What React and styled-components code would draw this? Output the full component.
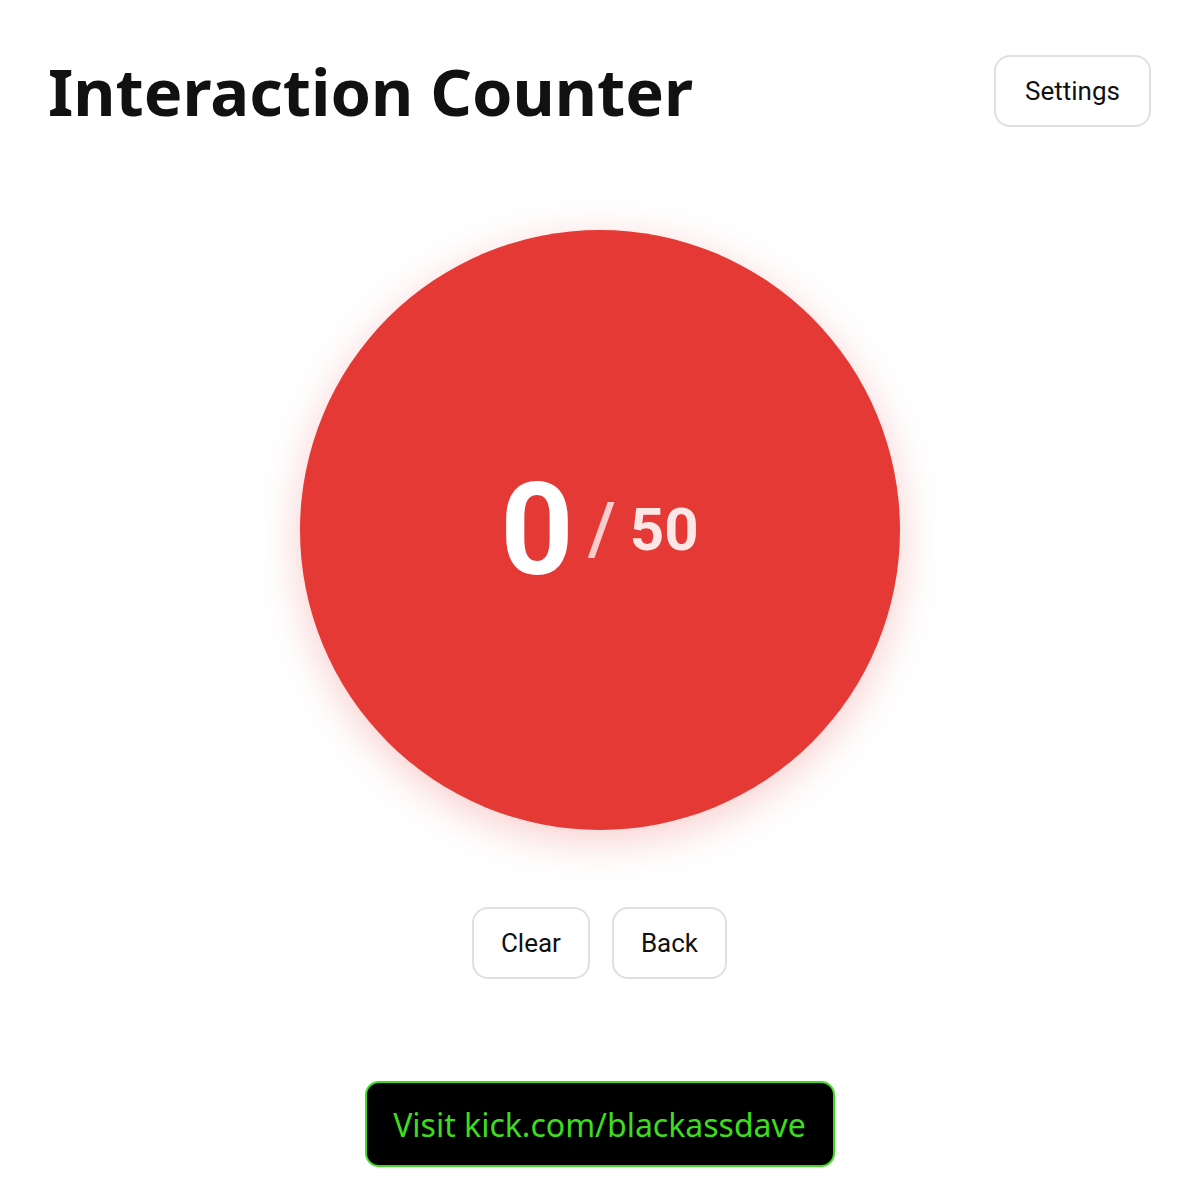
import styled, { createGlobalStyle } from 'styled-components';

const GlobalStyle = createGlobalStyle`
	html, body {
		margin: 0;
		padding: 0;
		background: #fff;
	}
	body {
		font-family: Roboto, 'Liberation Sans', sans-serif;
		color: #111;
	}
`;

const App = () => {
	const count = 0;
	const goal = 50;

	return (
		<Page>
			<GlobalStyle />
			<Header>
				<Title>Interaction Counter</Title>
				<OutlineButton $wide>Settings</OutlineButton>
			</Header>
			<Circle>
				<Count>{count}</Count>
				<Slash>/</Slash>
				<Goal>{goal}</Goal>
			</Circle>
			<Controls>
				<OutlineButton>Clear</OutlineButton>
				<OutlineButton>Back</OutlineButton>
			</Controls>
			<KickLink href='#'>Visit kick.com/blackassdave</KickLink>
		</Page>
	);
};

export default App;

const Page = styled.div`
	width: 1200px;
	height: 1200px;
	box-sizing: border-box;
	padding: 55px 49px 0 48px;
	display: flex;
	flex-direction: column;
	align-items: center;
`;

const Header = styled.header`
	width: 100%;
	display: flex;
	align-items: center;
	justify-content: space-between;
`;

const Title = styled.h1`
	margin: 0;
	font-family: 'Noto Sans', 'Open Sans', sans-serif;
	font-weight: 700;
	font-size: 65px;
	line-height: 72px;
	color: #111;
`;

const OutlineButton = styled.button`
	box-sizing: border-box;
	height: 72px;
	padding: 0 ${p => (p.$wide ? '29px' : '27px')};
	background: #fff;
	border: 2px solid #e0e0e0;
	border-radius: 16px;
	font-family: Roboto, sans-serif;
	font-size: 26px;
	color: #111;
	cursor: pointer;
`;

const Circle = styled.div`
	margin-top: 103px;
	width: 600px;
	height: 600px;
	border-radius: 50%;
	background: #e53935;
	box-shadow: 0 10px 40px rgba(229, 57, 53, 0.25);
	display: flex;
	align-items: center;
	justify-content: center;
	gap: 14px;
	font-family: Roboto, sans-serif;
	font-weight: 700;
`;

const Count = styled.span`
	font-size: 128px;
	color: #fff;
	line-height: 1;
`;

const Slash = styled.span`
	font-size: 72px;
	color: rgba(255, 255, 255, 0.75);
	line-height: 1;
	font-weight: 500;
`;

const Goal = styled.span`
	font-size: 60px;
	color: rgba(255, 255, 255, 0.88);
	line-height: 1;
`;

const Controls = styled.div`
	margin-top: 77px;
	display: flex;
	gap: 22px;
`;

const KickLink = styled.a`
	margin-top: 102px;
	box-sizing: border-box;
	width: 470px;
	height: 86px;
	display: flex;
	align-items: center;
	justify-content: center;
	background: #000;
	border: 2px solid #3ddc1f;
	border-radius: 14px;
	font-family: 'Noto Sans', 'Open Sans', sans-serif;
	font-size: 32px;
	color: #3ddc1f;
	text-decoration: none;
`;
